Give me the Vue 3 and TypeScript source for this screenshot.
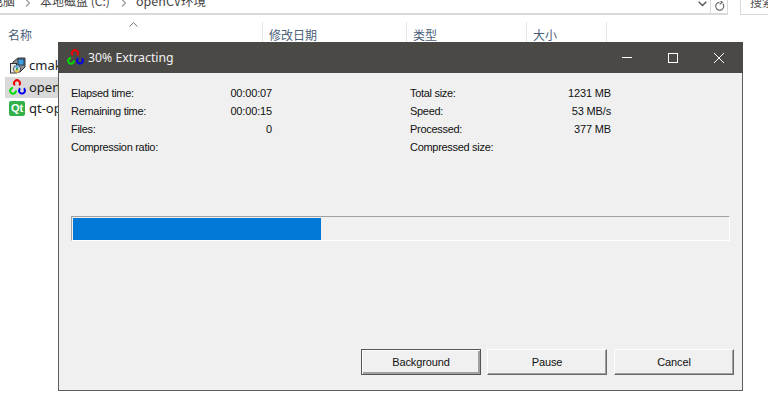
<script setup lang="ts">
interface Stat { label: string; value: string }
const left: Stat[] = [
  { label: 'Elapsed time:', value: '00:00:07' },
  { label: 'Remaining time:', value: '00:00:15' },
  { label: 'Files:', value: '0' },
  { label: 'Compression ratio:', value: '' },
]
const right: Stat[] = [
  { label: 'Total size:', value: '1231 MB' },
  { label: 'Speed:', value: '53 MB/s' },
  { label: 'Processed:', value: '377 MB' },
  { label: 'Compressed size:', value: '' },
]
const columns = [
  { name: '名称', width: 263 },
  { name: '修改日期', width: 144 },
  { name: '类型', width: 120 },
  { name: '大小', width: 80 },
]
const progress = 30
</script>

<template>
  <div class="screen">
    <div class="explorer">
      <div class="topbar">
        <div class="address">
          <span class="crumb first">电脑</span>
          <svg class="sep" width="6" height="8" viewBox="0 0 6 8"><path d="M1 0.5 L4.5 4 L1 7.5" fill="none" stroke="#9a9a9a" stroke-width="1.2" /></svg>
          <span class="crumb second">本地磁盘 (C:)</span>
          <svg class="sep" width="6" height="8" viewBox="0 0 6 8"><path d="M1 0.5 L4.5 4 L1 7.5" fill="none" stroke="#9a9a9a" stroke-width="1.2" /></svg>
          <span class="crumb third">openCV环境</span>
          <svg class="chev" width="9" height="6" viewBox="0 0 9 6"><path d="M0.7 0.7 L4.5 4.5 L8.3 0.7" fill="none" stroke="#555" stroke-width="1.4" /></svg>
          <div class="refresh">
            <svg width="11" height="11" viewBox="0 0 11 11"><path d="M8.8 2.6 A4 4 0 1 1 5.5 1.2 M5.5 -1 L8.3 1.2 L5.6 3.2" fill="none" stroke="#666" stroke-width="1.1" /></svg>
          </div>
        </div>
        <div class="search">搜索</div>
      </div>
      <div class="header">
        <div v-for="c in columns" :key="c.name" class="col" :style="{ width: c.width + 'px' }">{{ c.name }}</div>
        <svg class="sort" width="9" height="5" viewBox="0 0 9 5"><path d="M0.5 4.5 L4.5 0.7 L8.5 4.5" fill="none" stroke="#777" stroke-width="1" /></svg>
      </div>
      <div class="files">
        <div class="file">
          <svg class="ficon" width="17" height="17" viewBox="0 0 17 17">
            <path d="M4 5 L9 1 L16 1 L16 10 L11 15 L4 15 Z" fill="#8c9198" stroke="#2f3338" stroke-width="1" />
            <rect x="9" y="2" width="6" height="6" fill="#3f9ee0" stroke="#1f3548" stroke-width="0.9" />
            <rect x="1.5" y="6.5" width="6" height="9.5" fill="#e6e6e6" stroke="#333" stroke-width="1" />
            <circle cx="8" cy="12" r="3.6" fill="#e2e2e2" stroke="#3c3c3c" stroke-width="0.9" />
            <path d="M8 12 L5.5 9.5 A3.6 3.6 0 0 1 10.5 9.5 Z" fill="#5fb6e8" />
            <path d="M8 12 L5.5 14.5 A3.6 3.6 0 0 0 10.5 14.5 Z" fill="#e9c84f" />
            <circle cx="8" cy="12" r="1.2" fill="#3c9b45" />
          </svg>
          <span>cmake</span>
        </div>
        <div class="file selected">
          <svg class="ficon" width="17" height="17" viewBox="0 0 17 17">
            <path d="M5.9 6.2 A2.9 2.9 0 1 1 10.1 6.2" fill="none" stroke="#ef0000" stroke-width="2" />
            <path d="M4 8.9 A2.9 2.9 0 1 0 6.86 11.3" fill="none" stroke="#00dc00" stroke-width="2" />
            <path d="M11.2 9.4 A2.9 2.9 0 1 0 14.8 9.4" fill="none" stroke="#0000ee" stroke-width="2" />
          </svg>
          <span>opencv</span>
        </div>
        <div class="file">
          <span class="qt">Qt</span>
          <span>qt-opensource</span>
        </div>
      </div>
    </div>

    <section class="dialog">
      <header class="titlebar">
        <svg class="ficon" width="17" height="17" viewBox="0 0 17 17">
          <path d="M5.9 6.2 A2.9 2.9 0 1 1 10.1 6.2" fill="none" stroke="#ef0000" stroke-width="2" />
          <path d="M4 8.9 A2.9 2.9 0 1 0 6.86 11.3" fill="none" stroke="#00dc00" stroke-width="2" />
          <path d="M11.2 9.4 A2.9 2.9 0 1 0 14.8 9.4" fill="none" stroke="#0000ee" stroke-width="2" />
        </svg>
        <span class="title">{{ progress }}% Extracting</span>
        <div class="winctl">
          <span class="ctl"><svg width="10" height="10" viewBox="0 0 10 10"><path d="M0 4.5 H10" stroke="#fff" stroke-width="1" /></svg></span>
          <span class="ctl"><svg width="10" height="10" viewBox="0 0 10 10"><rect x="0.5" y="0.5" width="9" height="9" fill="none" stroke="#fff" stroke-width="1" /></svg></span>
          <span class="ctl"><svg width="10" height="10" viewBox="0 0 10 10"><path d="M0 0 L10 10 M10 0 L0 10" stroke="#fff" stroke-width="1" /></svg></span>
        </div>
      </header>
      <div class="body">
        <div class="stats">
          <div class="stat-col left">
            <div v-for="s in left" :key="s.label" class="stat">
              <span class="label">{{ s.label }}</span><span class="value">{{ s.value }}</span>
            </div>
          </div>
          <div class="stat-col right">
            <div v-for="s in right" :key="s.label" class="stat">
              <span class="label">{{ s.label }}</span><span class="value">{{ s.value }}</span>
            </div>
          </div>
        </div>
        <div class="track">
          <div class="fill" :style="{ width: '248px' }"></div>
        </div>
        <div class="buttons">
          <button class="btn default">Background</button>
          <button class="btn pause">Pause</button>
          <button class="btn">Cancel</button>
        </div>
      </div>
    </section>
  </div>
</template>

<style scoped>
.screen {
  position: relative;
  width: 768px;
  height: 419px;
  overflow: hidden;
  background: #fff;
  font-family: "Liberation Sans", sans-serif;
}
.explorer {
  display: flex;
  flex-direction: column;
  font-family: "Noto Sans CJK SC", "Liberation Sans", sans-serif;
  color: #333;
}
.topbar {
  display: flex;
  height: 15px;
  gap: 12px;
}
.address {
  width: 728px;
  height: 15px;
  box-sizing: border-box;
  border-bottom: 2px solid #d9d9d9;
  border-right: 1px solid #d9d9d9;
  display: flex;
  align-items: center;
  overflow: hidden;
  font-size: 12px;
  color: #444;
  flex: none;
}
.crumb {
  line-height: 12px;
  height: 13px;
  margin-top: -10px;
  white-space: nowrap;
}
.crumb.first { width: 15px; overflow: hidden; direction: rtl; }
.sep { margin: -7px 9px 0 10px; flex: none; }
.crumb.second { width: 71px; }
.crumb.third { width: 70px; font-size: 12.5px; }
.chev { margin: -6px 0 0 492px; flex: none; }
.refresh {
  margin-left: 3px;
  padding-left: 3px;
  height: 15px;
  width: 13px;
  border-left: 1px solid #d9d9d9;
  display: flex;
  align-items: center;
  flex: none;
}
.search {
  flex: 1;
  box-sizing: border-box;
  height: 15px;
  border: 1px solid #d9d9d9;
  border-top: 0;
  border-right: 0;
  font-size: 12px;
  line-height: 4px;
  padding-left: 9px;
  color: #555;
  overflow: hidden;
  white-space: nowrap;
}
.header {
  position: relative;
  display: flex;
  height: 21px;
  margin-top: 7px;
  font-size: 12px;
  color: #4c607a;
}
.sort {
  position: absolute;
  left: 129px;
  top: 0;
}
.col {
  box-sizing: border-box;
  border-right: 1px solid #e5e5e5;
  padding: 3px 0 0 6px;
  line-height: 20px;
  flex: none;
}
.col:first-child { padding-left: 8px; }
.files {
  margin-top: 12px;
  padding-left: 5px;
  font-family: "Noto Sans", sans-serif;
  font-size: 13px;
  color: #1c1c1c;
}
.file {
  height: 21.5px;
  width: 200px;
  display: flex;
  align-items: center;
  gap: 3px;
  padding-left: 4px;
  box-sizing: border-box;
  line-height: 1;
}
.file.selected { background: #d9d9d9; }
.ficon { flex: none; }
.qt {
  width: 16px;
  height: 15px;
  margin-right: 1px;
  background: #32b04a;
  border-radius: 2px;
  color: #fff;
  font: bold 11px/15px "Liberation Sans", sans-serif;
  text-align: center;
  flex: none;
}
.dialog {
  position: absolute;
  left: 58px;
  top: 42px;
  width: 685px;
  height: 349px;
  box-sizing: border-box;
  border: 1px solid #5e5e5e;
  border-top: 0;
  background: #f0f0f0;
  display: flex;
  flex-direction: column;
  color: #111;
  font-size: 11px;
}
.titlebar {
  height: 31px;
  flex: none;
  background: #4b4946;
  display: flex;
  align-items: center;
  padding: 0 1px 0 9px;
  color: #f2f2f2;
  margin: 0 -1px;
}
.title {
  font-family: "Noto Sans", sans-serif;
  font-size: 12.3px;
  margin-left: 4px;
}
.winctl { margin-left: auto; display: flex; }
.ctl {
  width: 46px;
  height: 31px;
  display: flex;
  align-items: center;
  justify-content: center;
}
.ctl svg { display: block; }
.body {
  flex: 1;
  display: flex;
  flex-direction: column;
  padding: 11px 8px 15px 12px;
}
.stats {
  display: flex;
  height: 72px;
  flex: none;
}
.stat-col { display: flex; flex-direction: column; width: 201px; }
.stat-col.left { margin-right: 138px; }
.stat {
  display: flex;
  justify-content: space-between;
  height: 18px;
  line-height: 18px;
}
.label { letter-spacing: -0.3px; }
.value { letter-spacing: -0.15px; }
.track {
  height: 25px;
  margin-top: 60px;
  width: 659px;
  box-sizing: border-box;
  border: 1px solid #fff;
  border-top-color: #a0a0a0;
  border-left-color: #a0a0a0;
  padding: 1px 1px 0;
  flex: none;
}
.fill { height: 100%; background: #0078d7; }
.buttons {
  margin-top: auto;
  display: flex;
  justify-content: flex-end;
  gap: 6px;
}
.btn {
  width: 120px;
  height: 26px;
  box-sizing: border-box;
  padding: 0;
  background: #f0f0f0;
  border: 1px solid;
  border-color: #fff #696969 #696969 #fff;
  box-shadow: inset -1px -1px 0 #a0a0a0;
  font: 11px "Liberation Sans", sans-serif;
  letter-spacing: -0.1px;
  color: #111;
}
.btn.pause { margin-right: 1px; }
.btn.default {
  border-color: #555;
  box-shadow: inset 1px 1px 0 #fff, inset -2px -2px 0 #a0a0a0;
}
</style>
